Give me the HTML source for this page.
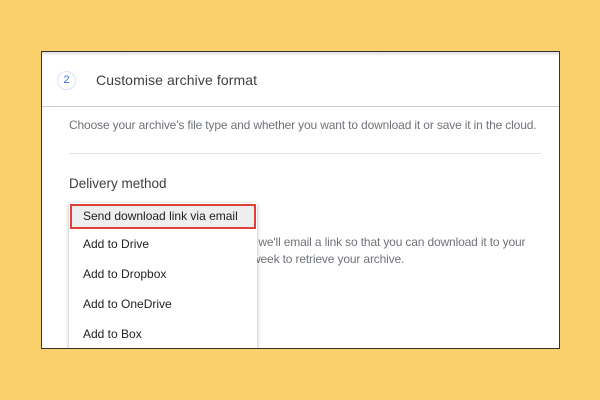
<!DOCTYPE html>
<html><head><style>
body{margin:0;width:600px;height:400px;background:#f9d06b;position:relative;overflow:hidden;font-family:"Liberation Sans",Arial,sans-serif;}
.frame{position:absolute;left:41px;top:51px;width:517px;height:296px;background:#fff;border:1px solid #333;overflow:hidden;}
.abs{position:absolute;white-space:nowrap;}
</style></head><body>
<div class="frame">
 <div class="abs" style="left:0;top:0;width:100%;height:4px;background:linear-gradient(#ddd,#fff)"></div>
 <div class="abs" style="left:15px;top:19px;width:17px;height:17px;border:1px solid #d6e2fb;border-radius:50%;color:#3b6fe0;font-size:11px;text-align:center;line-height:17px">2</div>
 <div class="abs" style="left:54px;top:20px;font-size:14px;color:#3c4043;letter-spacing:0.1px">Customise archive format</div>
 <div class="abs" style="left:0;top:54px;width:100%;height:1px;background:#ccc"></div>
 <div class="abs" style="left:27px;top:66px;font-size:12px;color:#6f7378;letter-spacing:-0.15px">Choose your archive's file type and whether you want to download it or save it in the cloud.</div>
 <div class="abs" style="left:27px;top:101px;width:472px;height:1px;background:#e2e2e2"></div>
 <div class="abs" style="left:27px;top:124px;font-size:13.5px;color:#3c4043">Delivery method</div>
 <div class="abs" style="left:210px;top:183px;font-size:12px;color:#6f7378;letter-spacing:-0.15px">, we'll email a link so that you can download it to your</div>
 <div class="abs" style="left:210px;top:200px;font-size:12px;color:#6f7378;letter-spacing:-0.15px">week to retrieve your archive.</div>
 <div class="abs" style="left:27px;top:151px;width:188px;height:160px;background:#fff;box-shadow:0 1px 4px rgba(0,0,0,.3)"></div>
 <div class="abs" style="left:28px;top:152px;width:182px;height:21px;background:#eee;border:2px solid #e0403a"></div>
 <div class="abs" style="left:41px;top:157px;font-size:12px;color:#222">Send download link via email</div>
 <div class="abs" style="left:41px;top:185px;font-size:12px;color:#222">Add to Drive</div>
 <div class="abs" style="left:41px;top:215px;font-size:12px;color:#222">Add to Dropbox</div>
 <div class="abs" style="left:41px;top:245px;font-size:12px;color:#222">Add to OneDrive</div>
 <div class="abs" style="left:41px;top:275px;font-size:12px;color:#222">Add to Box</div>
</div>
</body></html>
